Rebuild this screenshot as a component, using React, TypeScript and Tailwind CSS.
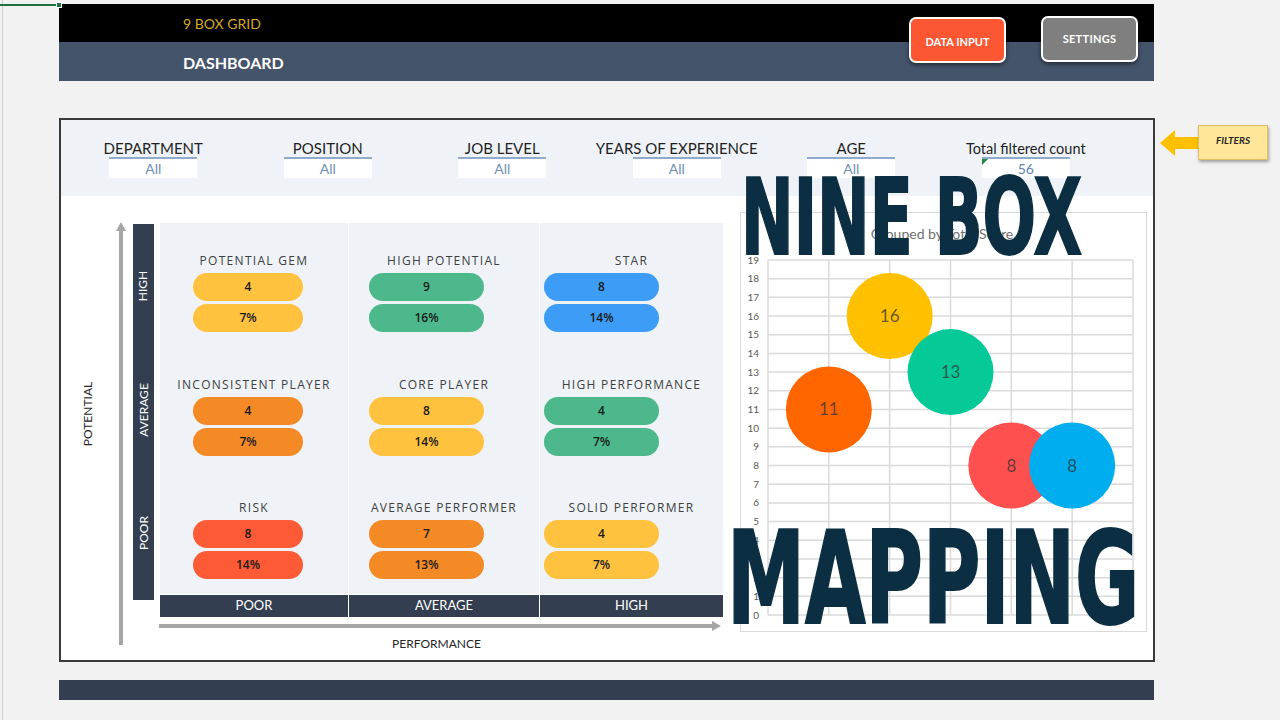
import React from "react";

type Cell = { title: string; count: string; pct: string; color: string };

const YELLOW = "bg-[#ffc23f]";
const GREEN = "bg-[#4db88b]";
const BLUE = "bg-[#3d9cf5]";
const ORANGE = "bg-[#f38a25]";
const RED = "bg-[#fc5b35]";

const rows: Cell[][] = [
  [
    { title: "POTENTIAL GEM", count: "4", pct: "7%", color: YELLOW },
    { title: "HIGH POTENTIAL", count: "9", pct: "16%", color: GREEN },
    { title: "STAR", count: "8", pct: "14%", color: BLUE },
  ],
  [
    { title: "INCONSISTENT PLAYER", count: "4", pct: "7%", color: ORANGE },
    { title: "CORE PLAYER", count: "8", pct: "14%", color: YELLOW },
    { title: "HIGH PERFORMANCE", count: "4", pct: "7%", color: GREEN },
  ],
  [
    { title: "RISK", count: "8", pct: "14%", color: RED },
    { title: "AVERAGE PERFORMER", count: "7", pct: "13%", color: ORANGE },
    { title: "SOLID PERFORMER", count: "4", pct: "7%", color: YELLOW },
  ],
];

const colPill = ["ml-[33px] w-[110px]", "ml-[20px] w-[115px]", "ml-[4px] w-[115px]"];

const filters = ["DEPARTMENT", "POSITION", "JOB LEVEL", "YEARS OF EXPERIENCE", "AGE"];

function Chart() {
  const x0 = 27;
  const x1 = 392;
  const yTop = 47;
  const yBot = 402;
  const sy = (yBot - yTop) / 19;
  const sx = (x1 - x0) / 6;
  const bubbles = [
    { i: 1, v: 11, c: "#ff6600", t: "11" },
    { i: 2, v: 16, c: "#ffc000", t: "16" },
    { i: 3, v: 13, c: "#06c998", t: "13" },
    { i: 4, v: 8, c: "#ff5050", t: "8" },
    { i: 5, v: 8, c: "#00adef", t: "8" },
  ];
  return (
    <svg width="405" height="418" className="block">
      <text x="201" y="26" textAnchor="middle" fontSize="14" fill="#6f6f6f" fontFamily="Lato, sans-serif">
        Grouped by Total Score
      </text>
      {Array.from({ length: 20 }).map((_, i) => (
        <line key={"h" + i} x1={x0} x2={x1} y1={yBot - i * sy} y2={yBot - i * sy} stroke="#dadada" strokeWidth="1.5" />
      ))}
      {Array.from({ length: 7 }).map((_, i) => (
        <line key={"v" + i} x1={x0 + i * sx} x2={x0 + i * sx} y1={yTop} y2={yBot} stroke="#dadada" strokeWidth="1.5" />
      ))}
      {Array.from({ length: 20 }).map((_, i) => (
        <text key={"l" + i} x={18} y={yBot - i * sy + 3.5} textAnchor="end" fontSize="10" fill="#595959" fontFamily="Lato, sans-serif">
          {i}
        </text>
      ))}
      {bubbles.map((b, k) => (
        <g key={k}>
          <circle cx={x0 + b.i * sx} cy={yBot - b.v * sy} r="43" fill={b.c} />
          <text x={x0 + b.i * sx} y={yBot - b.v * sy + 6} textAnchor="middle" fontSize="17" fill="#333333" fillOpacity="0.75" fontFamily="Lato, sans-serif">
            {b.t}
          </text>
        </g>
      ))}
    </svg>
  );
}

export default function App() {
  return (
    <div className="relative w-[1280px] h-[720px] overflow-hidden bg-[#f2f2f2] flex font-['Lato',sans-serif] text-[#262626]">
      {/* gutter */}
      <div className="relative w-[59px] shrink-0">
        <div className="absolute left-[2px] top-0 bottom-0 w-px bg-[#d0d0d0]" />
        <div className="absolute left-0 top-[4px] w-[58px] h-[2px] bg-[#1e7145]" />
        <div className="absolute left-[56px] top-[2px] w-[6px] h-[6px] bg-[#1e7145] border border-white" />
      </div>

      <div className="flex flex-col w-[1221px]">
        {/* header */}
        <div className="mt-[4px] w-[1095px] h-[77px] flex bg-[linear-gradient(to_bottom,#000000_0px,#000000_38px,#44546a_38px,#44546a_100%)]">
          <div className="pl-[124px] flex flex-col">
            <div className="h-[38px] flex items-center text-[14px] text-[#d6a92c]">9 BOX GRID</div>
            <div className="h-[39px] flex items-center pt-[3px] text-[16px] font-bold text-white">DASHBOARD</div>
          </div>
          <div className="ml-auto mr-[16px] flex items-start gap-[35px]">
            <div className="mt-[13px] w-[97px] h-[46px] rounded-[7px] border-2 border-white bg-[#fc5632] shadow-[0_2px_4px_rgba(0,0,0,0.5)] flex items-center justify-center pt-[5px] text-[11px] font-bold text-white">
              DATA INPUT
            </div>
            <div className="mt-[12px] w-[97px] h-[46px] rounded-[7px] border-2 border-white bg-[#7f7f7f] shadow-[0_2px_4px_rgba(0,0,0,0.5)] flex items-center justify-center text-[11px] font-bold text-white tracking-[0.3px]">
              SETTINGS
            </div>
          </div>
        </div>

        {/* panel row */}
        <div className="mt-[37px] flex items-start">
          <div className="w-[1096px] h-[544px] border-2 border-[#3a3a3a] bg-white flex flex-col">
            {/* filters */}
            <div className="h-[76px] bg-[#eff3f7] pl-[5px] pt-[20px] grid grid-cols-[repeat(6,174.5px)]">
              {filters.map((f) => (
                <div key={f} className="flex flex-col items-center">
                  <div className="text-[15px] leading-[17px] whitespace-nowrap text-[#1f1f1f]">{f}</div>
                  <div className="w-[88px] h-[21px] border-t-2 border-[#8faacb] bg-white flex items-center justify-center text-[14px] text-[#6f8fb3]">
                    All
                  </div>
                </div>
              ))}
              <div className="flex flex-col items-center">
                <div className="text-[14.5px] leading-[17px] whitespace-nowrap text-[#1f1f1f]">Total filtered count</div>
                <div className="relative w-[88px] h-[21px] border-t-2 border-[#8faacb] bg-white flex items-center justify-center text-[14px] text-[#6386ad]">
                  <span className="absolute left-0 top-0 w-0 h-0 border-t-[6px] border-t-[#1e8a3a] border-r-[6px] border-r-transparent" />
                  56
                </div>
              </div>
            </div>

            {/* body */}
            <div className="pt-[16px] flex items-start">
              <div className="mt-[10px] h-[423px] flex items-start">
                {/* POTENTIAL */}
                <div className="w-[55px] h-[423px] pb-[40px] flex items-center justify-center">
                  <span className="-rotate-90 whitespace-nowrap text-[12px]">POTENTIAL</span>
                </div>
                {/* vertical arrow */}
                <svg width="10" height="423" className="block">
                  <rect x="3" y="8" width="4" height="415" fill="#a6a6a6" />
                  <polygon points="0,9 5,0 10,9" fill="#a6a6a6" />
                </svg>
                {/* side bar */}
                <div className="ml-[7px] mt-[2px] w-[21px] h-[376px] bg-[#333f50] flex flex-col">
                  <div className="h-[371px] flex flex-col">
                    {["HIGH", "AVERAGE", "POOR"].map((l) => (
                      <div key={l} className="flex-1 flex items-center justify-center">
                        <span className="-rotate-90 whitespace-nowrap text-[12px] text-white">{l}</span>
                      </div>
                    ))}
                  </div>
                </div>
                {/* cells */}
                <div className="ml-[6px] mt-[1px] w-[563px] flex flex-col">
                  <div className="h-[371px] grid grid-cols-[188px_190px_183px] grid-rows-3 gap-x-[1px] bg-white">
                    {rows.map((r, ri) =>
                      r.map((c, ci) => (
                        <div key={ri + "-" + ci} className="bg-[#eff3f7] flex flex-col pt-[31px]">
                          <div className="text-center text-[12px] leading-[14px] tracking-[1.3px] text-[#404040] font-['Open_Sans',sans-serif] whitespace-nowrap">
                            {c.title}
                          </div>
                          <div className={`${colPill[ci]} ${c.color} mt-[5px] h-[28px] rounded-full flex items-center justify-center text-[12px] font-semibold text-[#1a1a1a] font-['Open_Sans',sans-serif]`}>
                            {c.count}
                          </div>
                          <div className={`${colPill[ci]} ${c.color} mt-[3px] h-[28px] rounded-full flex items-center justify-center text-[12px] font-semibold text-[#1a1a1a] font-['Open_Sans',sans-serif]`}>
                            {c.pct}
                          </div>
                        </div>
                      ))
                    )}
                  </div>
                  <div className="mt-[1px] h-[22px] grid grid-cols-[188px_190px_183px] gap-x-[1px]">
                    {["POOR", "AVERAGE", "HIGH"].map((l) => (
                      <div key={l} className="bg-[#333f50] flex items-center justify-center text-[13px] text-white">
                        {l}
                      </div>
                    ))}
                  </div>
                  <svg width="563" height="10" className="block mt-[4px] -ml-[1px]">
                    <rect x="0" y="3" width="554" height="4" fill="#a6a6a6" />
                    <polygon points="553,0 562,5 553,10" fill="#a6a6a6" />
                  </svg>
                  <div className="mt-[6px] text-center text-[12px] leading-[14px] pr-[10px]">PERFORMANCE</div>
                </div>
              </div>

              {/* chart */}
              <div className="ml-[17px] w-[407px] h-[420px] border border-[#d9d9d9] bg-white">
                <Chart />
              </div>
            </div>
          </div>

          {/* FILTERS callout */}
          <div className="ml-[5px] mt-[7px] flex items-center">
            <svg width="38" height="26" className="block">
              <polygon points="0,13 15,0 15,7 38,7 38,19 15,19 15,26" fill="#ffc000" />
            </svg>
            <div className="w-[70px] h-[35px] bg-[#ffe699] border border-[#e2c060] shadow-[1px_2px_3px_rgba(0,0,0,0.35)] flex items-center justify-center pb-[4px] text-[10px] font-bold italic text-[#262626]">
              FILTERS
            </div>
          </div>
        </div>

        {/* bottom bar */}
        <div className="mt-[18px] w-[1095px] h-[20px] bg-[#333f50]" />
      </div>

      {/* overlay title */}
      <div className="absolute left-[741px] top-[165px] text-[106px] leading-none font-bold text-[#0b2e42] [-webkit-text-stroke:2px_#0b2e42] font-['DejaVu_Sans_Condensed','DejaVu_Sans',sans-serif] whitespace-nowrap origin-left scale-x-[0.66]">
        NINE BOX
      </div>
      <div className="absolute left-[727px] top-[514px] text-[129px] leading-none font-bold text-[#0b2e42] [-webkit-text-stroke:2px_#0b2e42] font-['DejaVu_Sans_Condensed','DejaVu_Sans',sans-serif] whitespace-nowrap origin-left scale-x-[0.675]">
        MAPPING
      </div>
    </div>
  );
}
